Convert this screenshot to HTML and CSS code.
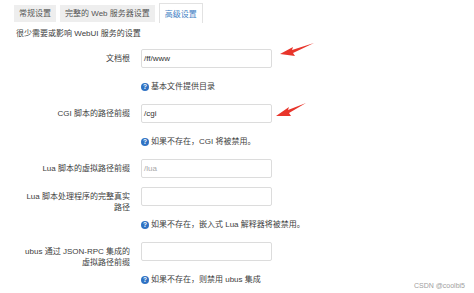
FILE: index.html
```html
<!DOCTYPE html>
<html lang="zh-CN">
<head>
<meta charset="utf-8">
<title>高级设置</title>
<link rel="stylesheet" href="styles.css">
</head>
<body>
<div class="page">
  <div class="tabs">
    <div class="tab">常规设置</div>
    <div class="tab">完整的 Web 服务器设置</div>
    <div class="tab active">高级设置</div>
  </div>
  <div class="desc">很少需要或影响 WebUI 服务的设置</div>
  <div class="form">
    <div class="row">
      <div class="label">文档根</div>
      <div class="field">
        <div class="input">/ff/www</div>
        <div class="help"><span class="qicon">?</span>基本文件提供目录</div>
      </div>
    </div>
    <div class="row">
      <div class="label">CGI 脚本的路径前缀</div>
      <div class="field">
        <div class="input">/cgi</div>
        <div class="help"><span class="qicon">?</span>如果不存在，CGI 将被禁用。</div>
      </div>
    </div>
    <div class="row">
      <div class="label">Lua 脚本的虚拟路径前缀</div>
      <div class="field">
        <div class="input placeholder">/lua</div>
      </div>
    </div>
    <div class="row">
      <div class="label">Lua 脚本处理程序的完整真实<br>路径</div>
      <div class="field">
        <div class="input"></div>
        <div class="help"><span class="qicon">?</span>如果不存在，嵌入式 Lua 解释器将被禁用。</div>
      </div>
    </div>
    <div class="row">
      <div class="label">ubus 通过 JSON-RPC 集成的<br>虚拟路径前缀</div>
      <div class="field">
        <div class="input"></div>
        <div class="help"><span class="qicon">?</span>如果不存在，则禁用 ubus 集成</div>
      </div>
    </div>
  </div>
</div>
<svg class="arrows" width="474" height="293" viewBox="0 0 474 293">
  <path d="M314 43 L292 50 L293 47 L280 54 L295 56 L293 53 Z" fill="#e8352b"/>
  <path d="M306 103 L288 110 L289 107 L276 116 L291 116 L289 113 Z" fill="#e8352b"/>
</svg>
<div class="watermark">CSDN @coolbi5</div>
</body>
</html>
```
FILE: styles.css
```css
html, body {
  margin: 0;
  padding: 0;
  background: #ffffff;
}
body {
  width: 474px;
  height: 293px;
  overflow: hidden;
  position: relative;
  font-family: "Liberation Sans", "Noto Sans CJK SC", sans-serif;
  font-size: 8px;
  color: #404040;
}
.page {
  padding-left: 14px;
}
.tabs {
  display: flex;
  gap: 4px;
  padding-top: 5px;
}
.tab {
  height: 17px;
  line-height: 17px;
  padding: 0 5px;
  background: #eeeeee;
  color: #555555;
}
.tab.active {
  background: #ffffff;
  color: #3f7fc4;
  border: 1px solid #e2e2e2;
  border-bottom: none;
  margin-top: -2px;
  height: 19px;
  line-height: 21px;
}
.desc {
  margin-top: 5px;
  line-height: 11px;
  padding-left: 2px;
  color: #404040;
}
.form {
  display: flex;
  flex-direction: column;
  gap: 9px;
  margin-top: 10px;
}
.row {
  display: grid;
  grid-template-columns: 116px 131px;
  column-gap: 11px;
  align-items: start;
}
.label {
  text-align: right;
  line-height: 11px;
  padding-top: 4px;
  color: #404040;
}
.input {
  box-sizing: border-box;
  width: 131px;
  height: 19px;
  line-height: 17px;
  border: 1px solid #dcdcdc;
  border-radius: 2px;
  padding: 0 2px;
  color: #333333;
  background: #ffffff;
}
.input.placeholder {
  color: #a8a8a8;
}
.help {
  margin-top: 13px;
  margin-bottom: 2px;
  height: 12px;
  line-height: 12px;
  white-space: nowrap;
  display: flex;
  align-items: center;
  color: #404040;
}
.qicon {
  flex: 0 0 auto;
  display: inline-block;
  width: 8px;
  height: 8px;
  border-radius: 50%;
  background: #2f72c4;
  color: #ffffff;
  font-size: 6.5px;
  font-weight: bold;
  line-height: 8px;
  text-align: center;
  margin-right: 2px;
}
.arrows {
  position: absolute;
  left: 0;
  top: 0;
  pointer-events: none;
}
.watermark {
  position: absolute;
  right: 9px;
  bottom: 4px;
  font-size: 7px;
  color: #a0a0a0;
}
```
